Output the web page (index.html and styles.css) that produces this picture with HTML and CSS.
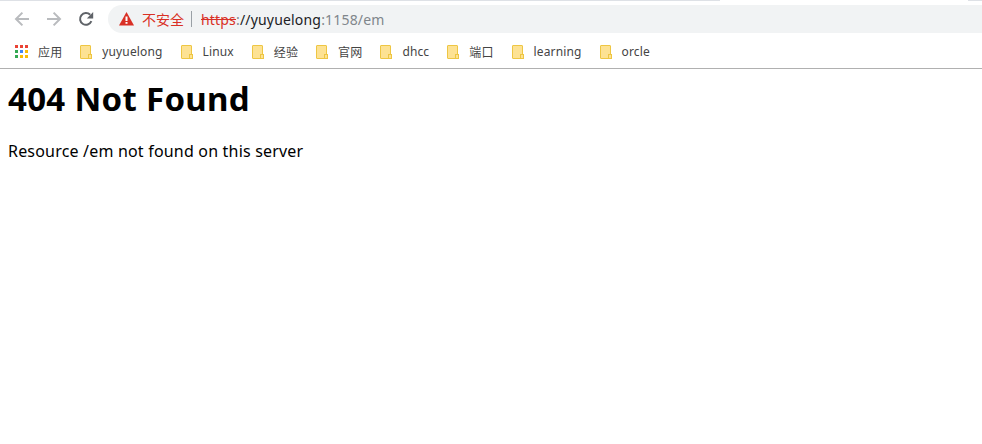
FILE: index.html
```html
<!DOCTYPE html>
<html lang="en">
  <head>
    <meta charset="UTF-8" />
    <title>404 Not Found</title>
    <link rel="stylesheet" href="styles.css">
  </head>
  <body>
    <div class="tab-strip">
      <div class="tab-edge"></div>
      <div class="tab-edge tab-edge-right"></div>
    </div>

    <div class="toolbar">
      <svg class="nav-icon" width="16" height="16" viewBox="0 0 16 16" fill="none" stroke="#b9bbbe" stroke-width="2">
        <path d="M15 8H2.2M8.4 1.6 2 8l6.4 6.4" />
      </svg>
      <svg class="nav-icon" width="16" height="16" viewBox="0 0 16 16" fill="none" stroke="#b9bbbe" stroke-width="2">
        <path d="M1 8h12.8M7.6 1.6 14 8l-6.4 6.4" />
      </svg>
      <svg class="nav-icon" width="16" height="16" viewBox="0 0 16 16" fill="none">
        <path d="M13.4 10.2A5.9 5.9 0 1 1 12.2 3.8" stroke="#5f6368" stroke-width="2" />
        <path d="M15.2 1v6.4H8.8z" fill="#5f6368" />
      </svg>

      <div class="omnibox">
        <svg class="warn-icon" width="15" height="14" viewBox="0 0 15 14">
          <path d="M7.5 0 15 13.5H0z" fill="#d93025" />
          <path d="M6.5 4.5h2v4.4h-2zM6.5 9.9h2v1.9h-2z" fill="#fff" />
        </svg>
        <span class="not-secure">不安全</span>
        <span class="divider"></span>
        <span class="url"><s class="scheme">https</s><span class="dim">:</span>//yuyuelong<span class="dim">:1158/em</span></span>
      </div>
    </div>

    <div class="bookmarks">
      <div class="bookmark apps">
        <svg width="13" height="13" viewBox="0 0 13 13">
          <rect x="0" y="0" width="3" height="3" fill="#ea4335" />
          <rect x="5" y="0" width="3" height="3" fill="#ea4335" />
          <rect x="10" y="0" width="3" height="3" fill="#ea4335" />
          <rect x="0" y="5" width="3" height="3" fill="#34a853" />
          <rect x="5" y="5" width="3" height="3" fill="#4285f4" />
          <rect x="10" y="5" width="3" height="3" fill="#fbbc05" />
          <rect x="0" y="10" width="3" height="3" fill="#34a853" />
          <rect x="5" y="10" width="3" height="3" fill="#fbbc05" />
          <rect x="10" y="10" width="3" height="3" fill="#fbbc05" />
        </svg>
        <span>应用</span>
      </div>
      <div class="bookmark"><i class="folder"></i><span>yuyuelong</span></div>
      <div class="bookmark"><i class="folder"></i><span>Linux</span></div>
      <div class="bookmark"><i class="folder"></i><span>经验</span></div>
      <div class="bookmark"><i class="folder"></i><span>官网</span></div>
      <div class="bookmark"><i class="folder"></i><span>dhcc</span></div>
      <div class="bookmark"><i class="folder"></i><span>端口</span></div>
      <div class="bookmark"><i class="folder"></i><span>learning</span></div>
      <div class="bookmark"><i class="folder"></i><span>orcle</span></div>
    </div>

    <div class="content">
      <h1>404 Not Found</h1>
      <p>Resource /em not found on this server</p>
    </div>
  </body>
</html>
```

FILE: styles.css
```css
body {
  margin: 0;
  background-color: white;
  font-family: "Noto Sans", "Noto Sans CJK SC", sans-serif;
  color: black;
}
.tab-strip {
  display: flex;
  justify-content: space-between;
  height: 1px;
  background-color: white;
}
.tab-edge {
  width: 720px;
  background-color: #dee1e6;
}
.tab-edge-right {
  width: 14px;
}
.toolbar {
  display: flex;
  align-items: center;
  height: 36px;
  padding-left: 14px;
}
.nav-icon {
  margin-right: 16px;
  flex: none;
}
.nav-icon:nth-child(3) {
  margin-right: 14px;
}
.omnibox {
  display: flex;
  align-items: center;
  flex: 1;
  height: 28px;
  padding-left: 11px;
  background-color: #f1f3f4;
  border-radius: 14px 0 0 14px;
}
.warn-icon {
  flex: none;
  margin-right: 8px;
}
.not-secure {
  font-size: 14px;
  color: #d93025;
}
.divider {
  width: 1px;
  height: 16px;
  margin: 0 9px 0 7px;
  background-color: #9aa0a6;
}
.url {
  font-size: 14px;
  letter-spacing: 0.18px;
  color: #202124;
}
.scheme {
  color: #d93025;
}
.dim {
  color: #80868b;
}
.bookmarks {
  display: flex;
  align-items: center;
  gap: 18px;
  height: 29px;
  padding: 0 0 2px 15px;
  border-bottom: 1px solid #b0b0b0;
  font-size: 12px;
  letter-spacing: 0.14px;
  color: #444;
}
.bookmark {
  display: flex;
  align-items: center;
  flex: none;
}
.apps span {
  margin-left: 10px;
}
.folder {
  position: relative;
  width: 9px;
  height: 12px;
  margin-right: 11px;
  background-color: #fde293;
  border: 1px solid #eec643;
  border-radius: 1px;
}
.folder::after {
  content: "";
  position: absolute;
  right: -2px;
  bottom: -1px;
  width: 2px;
  height: 3px;
  background-color: #fde293;
  border: 1px solid #eec643;
}
.content {
  padding: 0 8px;
}
h1 {
  margin: 8px 0 0;
  font-size: 33px;
  line-height: 44px;
  font-weight: bold;
  letter-spacing: 0.3px;
}
p {
  margin: 19px 0 0;
  font-size: 16px;
  line-height: 22px;
  letter-spacing: 0.19px;
}
```
